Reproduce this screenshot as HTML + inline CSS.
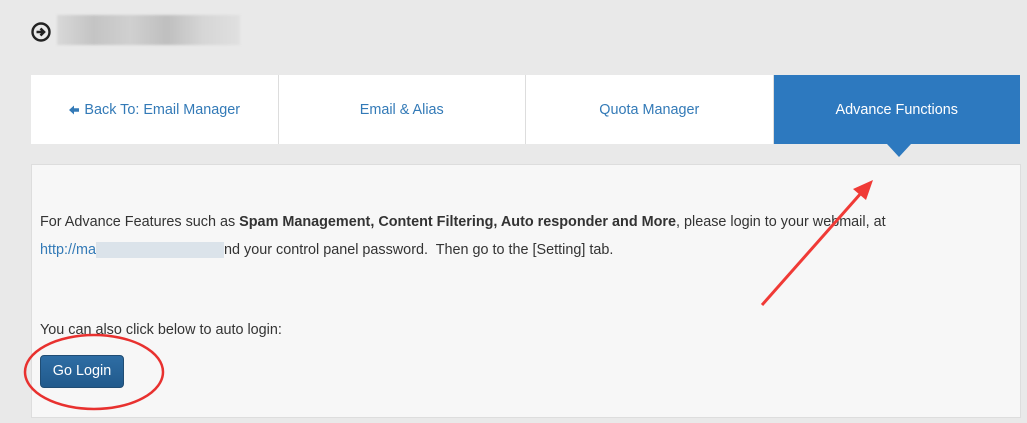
<!DOCTYPE html>
<html><head><style>
body{margin:0;width:1027px;height:423px;background:#e9e9e9;font-family:"Liberation Sans",Arial,sans-serif;position:relative;overflow:hidden;font-size:14.4px;color:#333}
.blur{position:absolute;left:57px;top:15px;width:183px;height:30px;background:linear-gradient(90deg,#d8d8d8,#c4c4c4 20%,#d0d0d0 40%,#bfbfbf 60%,#d6d6d6 80%,#e0e0e0);filter:blur(1px)}
.tabs{position:absolute;left:31px;top:75px;width:989px;height:69px;display:flex}
.tab{flex:1;background:#fff;border-right:1px solid #ddd;display:flex;align-items:center;justify-content:center;color:#337ab7;font-size:14.4px}
.tab.act{background:#2d79bf;color:#fff;border:none;position:relative}
.tab.act:after{content:"";position:absolute;left:113px;bottom:-13px;border-left:12px solid transparent;border-right:12px solid transparent;border-top:13px solid #2d79bf}
.panel{position:absolute;left:31px;top:164px;width:988px;height:252px;background:#f7f7f7;border:1px solid #ddd}
.t{position:absolute;left:40px;white-space:nowrap}
a{color:#337ab7;text-decoration:none}
.btn{position:absolute;left:40px;top:355px;width:84px;height:33px;background:linear-gradient(#2e6da4,#215a8c);border:1px solid #204d74;box-sizing:border-box;border-radius:4px;color:#fff;font-size:14.4px;line-height:31px;text-align:center}
</style></head><body>
<svg style="position:absolute;left:30px;top:21px" width="22" height="22" viewBox="0 0 22 22"><circle cx="11" cy="11" r="8.5" fill="none" stroke="#222" stroke-width="2.4"/><path d="M6.5 11h7M10.5 7.5l3.5 3.5-3.5 3.5" fill="none" stroke="#222" stroke-width="2.6"/></svg>
<div class="blur"></div>
<div class="tabs">
<div class="tab"><svg width="12" height="12" viewBox="0 0 12 12" style="margin-right:4px"><path d="M1 6L6 1.5V4.2H11V7.8H6V10.5Z" fill="#337ab7"/></svg>Back To: Email Manager</div>
<div class="tab">Email &amp; Alias</div>
<div class="tab">Quota Manager</div>
<div class="tab act">Advance Functions</div>
</div>
<div class="panel"></div>
<div class="t" style="top:214px">For Advance Features such as <b>Spam Management, Content Filtering, Auto responder and More</b>, please login to your webmail, at</div>
<div class="t" style="top:242px"><a>http://ma</a><span style="display:inline-block;width:128px;height:16px;background:#dbe3ea;vertical-align:middle"></span>nd your control panel password.&nbsp; Then go to the [Setting] tab.</div>
<div class="t" style="top:322px">You can also click below to auto login:</div>
<div class="btn">Go Login</div>
<svg style="position:absolute;left:0;top:0" width="1027" height="423"><ellipse cx="94" cy="372" rx="69" ry="37" fill="none" stroke="#e8312f" stroke-width="2.5"/><path d="M762 305L862 192" stroke="#f03a36" stroke-width="3"/><path d="M873 180L853 189L866 200Z" fill="#f03a36"/></svg>
</body></html>
